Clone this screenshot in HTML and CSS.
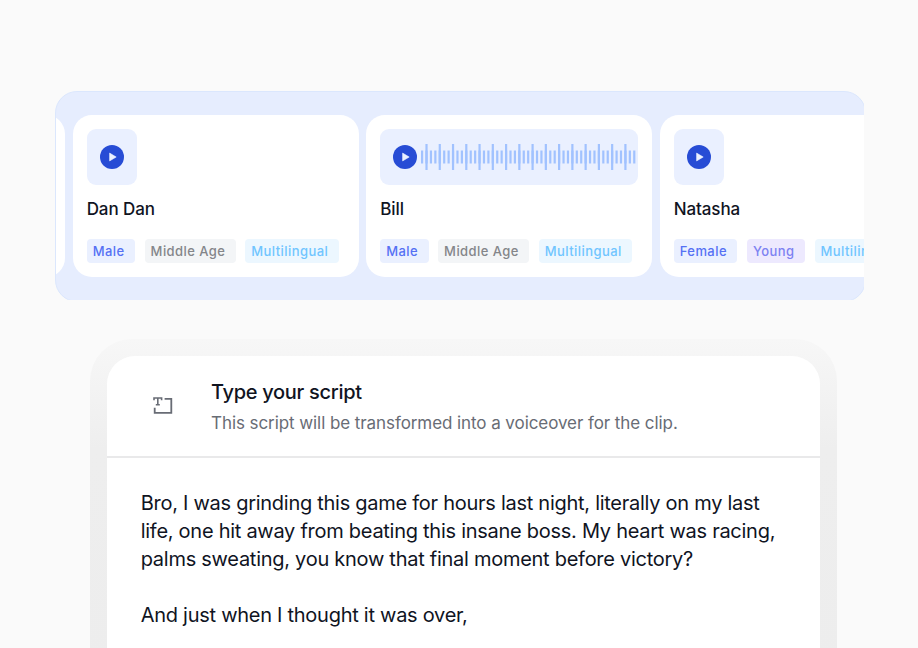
FILE: index.html
```html
<!DOCTYPE html>
<html lang="en">
<head>
<meta charset="utf-8">
<title>Type your script</title>
<link rel="stylesheet" href="styles.css">
</head>

<body>

<svg class="symbols" width="0" height="0">
  <symbol id="play" viewBox="0 0 24 24">
    <circle cx="12" cy="12" r="12" fill="#274cd5"/>
    <path d="M9.6 8.1v7.8l6.6-3.9z" fill="#ebf1ff" stroke="#ebf1ff" stroke-width=".6" stroke-linejoin="round"/>
  </symbol>
</svg>

<section class="voices">
  <div class="track">
    <div class="voice"></div>

    <div class="voice">
      <div class="player"><svg class="play"><use href="#play"/></svg></div>
      <h3>Dan Dan</h3>
      <div class="tags">
        <span class="tag blue">Male</span>
        <span class="tag gray">Middle Age</span>
        <span class="tag sky">Multilingual</span>
      </div>
    </div>

    <div class="voice">
      <div class="player wide">
        <svg class="play"><use href="#play"/></svg>
        <svg class="wave" viewBox="0 0 216 26">
          <path d="M0 13h215.2" stroke-width="13" stroke-dasharray="2.2 2.22"/>
          <path d="M4.42 13h211" stroke-width="26" stroke-dasharray="2.2 11.06"/>
        </svg>
      </div>
      <h3>Bill</h3>
      <div class="tags">
        <span class="tag blue">Male</span>
        <span class="tag gray">Middle Age</span>
        <span class="tag sky">Multilingual</span>
      </div>
    </div>

    <div class="voice">
      <div class="player"><svg class="play"><use href="#play"/></svg></div>
      <h3>Natasha</h3>
      <div class="tags">
        <span class="tag blue">Female</span>
        <span class="tag purple">Young</span>
        <span class="tag sky">Multilingual</span>
      </div>
    </div>
  </div>
</section>

<section class="frame">
  <div class="editor">
    <header>
      <svg class="icon" width="20" height="18" viewBox="0 0 20 18" fill="none" stroke="#686c75">
        <path d="M1 3.2V1h7.6v2.2M4.8 1v6.6M2.8 7.7h4" stroke-width="1.6"/>
        <path d="M11.6 1.8h6.7v14.1H1.7v-5.2" stroke-width="1.8"/>
      </svg>
      <div>
        <h2>Type your script</h2>
        <p>This script will be transformed into a voiceover for the clip.</p>
      </div>
    </header>
    <div class="script">
      <p>Bro, I was grinding this game for hours last night, literally on my last<br>
      life, one hit away from beating this insane boss. My heart was racing,<br>
      palms sweating, you know that final moment before victory?</p>
      <p>And just when I thought it was over,</p>
    </div>
  </div>
</section>

</body>
</html>
```
FILE: styles.css
```css
* {
  box-sizing: border-box;
}

body {
  margin: 0;
  height: 648px;
  padding-top: 91px;
  overflow: hidden;
  background: #fafafa;
  color: #10141f;
  font-family: Inter, sans-serif;
}

h2, h3, p {
  margin: 0;
}

.symbols {
  display: block;
}

/* voice carousel */
.voices {
  width: 809px;
  height: 209px;
  margin-left: 55px;
  overflow: hidden;
}

.track {
  display: flex;
  gap: 7.5px;
  width: 811px;
  height: 211px;
  padding: 23px 0;
  border: 1px solid #dbe7fd;
  border-radius: 22px;
  background: #e6edfe;
  overflow: hidden;
}

.voice {
  flex: none;
  width: 286px;
  height: 162px;
  padding: 14px;
  border-radius: 19px;
  background: #fff;
}

.voice:first-child {
  margin-left: -276.8px;
}

.player {
  display: flex;
  align-items: center;
  width: 50.5px;
  height: 56px;
  padding-left: 13px;
  border-radius: 9px;
  background: #eaf0ff;
}

.player.wide {
  width: 257.5px;
}

.play {
  flex: none;
  width: 24px;
  height: 24px;
}

.wave {
  flex: none;
  width: 216px;
  height: 26px;
  margin-left: 3.5px;
  fill: none;
  stroke: #a1c2ff;
}

.voice h3 {
  margin-top: 13px;
  font-size: 17px;
  font-weight: 500;
  line-height: 22px;
  letter-spacing: -.1px;
}

.tags {
  display: flex;
  gap: 9.5px;
  margin-top: 19px;
}

.tag {
  height: 24px;
  padding: 0 10.5px 0 6px;
  border-radius: 4px;
  font-size: 13px;
  font-weight: 500;
  line-height: 24px;
  letter-spacing: .43px;
  white-space: nowrap;
}

.blue {
  background: #eaf0ff;
  color: #5570f4;
}

.gray {
  background: #f3f5f7;
  color: #84868a;
}

.sky {
  background: #ecf7ff;
  color: #70c5ff;
}

.purple {
  background: #ede9fe;
  color: #7d82f2;
}

/* script editor */
.frame {
  width: 747px;
  height: 340px;
  margin: 39px 0 0 90px;
  padding: 17px 17px 0;
  border-radius: 42px 42px 0 0;
  background: linear-gradient(#f7f7f7, #eee 110px, #ededed);
}

.editor {
  height: 323px;
  border-radius: 28px 28px 0 0;
  background: #fff;
}

.editor header {
  display: flex;
  height: 102px;
  padding: 22px 0 0 46px;
  border-bottom: 2px solid #e9e9ea;
}

.icon {
  margin: 19px 38px 0 0;
}

.editor h2 {
  font-size: 20px;
  font-weight: 500;
  line-height: 28px;
  letter-spacing: -.3px;
}

.editor header p {
  margin-top: 5px;
  color: #686c75;
  font-size: 17px;
  line-height: 24px;
  letter-spacing: -.075px;
}

.script {
  margin: 31px 16px 0;
  padding-left: 17.7px;
  font-size: 20px;
  line-height: 28px;
  letter-spacing: -.27px;
  white-space: nowrap;
}

.script p + p {
  margin-top: 28px;
}
```
